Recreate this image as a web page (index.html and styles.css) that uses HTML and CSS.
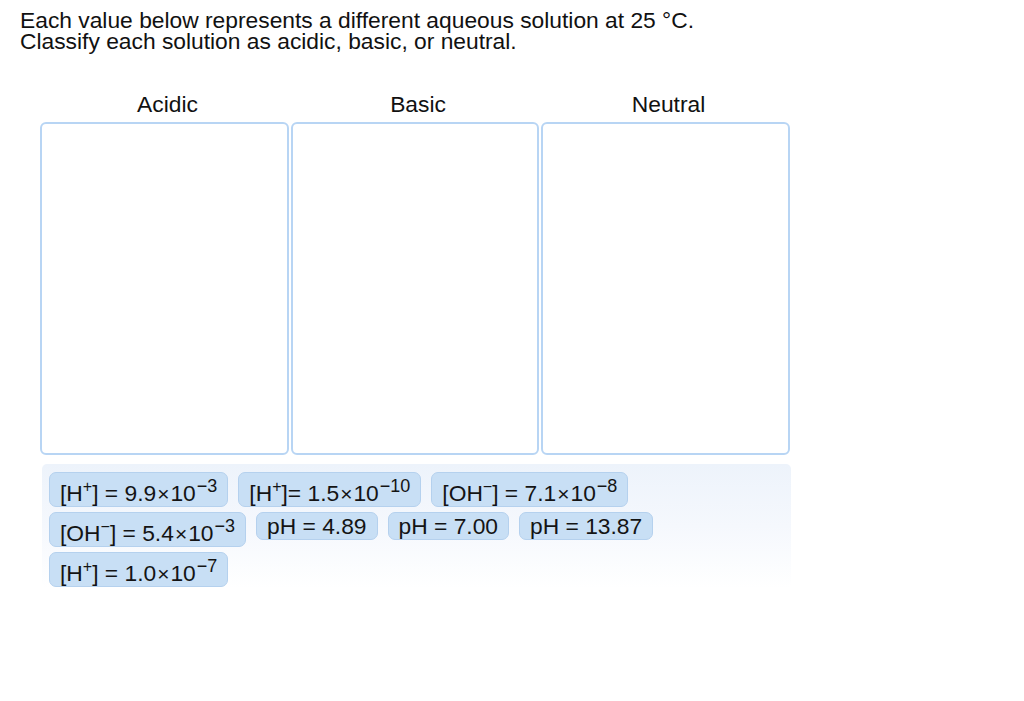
FILE: index.html
```html
<!DOCTYPE html>
<html lang="en">
<head>
<meta charset="utf-8">
<title>Classify solutions</title>
<link rel="stylesheet" href="styles.css">
</head>
<body>
<div class="prompt">
  <p>Each value below represents a different aqueous solution at 25 °C.</p>
  <p>Classify each solution as acidic, basic, or neutral.</p>
</div>
<div class="sorter">
  <div class="bins">
    <div class="bin">
      <div class="bin-label">Acidic</div>
      <div class="bin-box"></div>
    </div>
    <div class="bin">
      <div class="bin-label">Basic</div>
      <div class="bin-box"></div>
    </div>
    <div class="bin">
      <div class="bin-label">Neutral</div>
      <div class="bin-box"></div>
    </div>
  </div>
  <div class="pool">
    <div class="chip tall">[H<sup class="ion">+</sup>] = 9.9<span class="times">×</span>10<sup>−3</sup></div>
    <div class="chip tall">[H<sup class="ion">+</sup>]= 1.5<span class="times">×</span>10<sup>−10</sup></div>
    <div class="chip tall">[OH<sup class="ion">−</sup>] = 7.1<span class="times">×</span>10<sup>−8</sup></div>
    <div class="chip tall">[OH<sup class="ion">−</sup>] = 5.4<span class="times">×</span>10<sup>−3</sup></div>
    <div class="chip">pH = 4.89</div>
    <div class="chip">pH = 7.00</div>
    <div class="chip">pH = 13.87</div>
    <div class="chip tall">[H<sup class="ion">+</sup>] = 1.0<span class="times">×</span>10<sup>−7</sup></div>
  </div>
</div>
</body>
</html>
```
FILE: styles.css
```css
html, body {
  margin: 0;
  padding: 0;
  background: #ffffff;
}

body {
  font-family: "Liberation Sans", Arial, sans-serif;
  font-size: 22.8px;
  color: #111111;
}

.prompt {
  padding: 10px 0 0 20px;
}

.prompt p {
  margin: 0;
  line-height: 21px;
}

.sorter {
  padding: 39px 0 0 40px;
  width: 751px;
}

.bins {
  display: grid;
  grid-template-columns: 249px 248px 249px;
  column-gap: 2px;
}

.bin {
  display: flex;
  flex-direction: column;
}

.bin-label {
  text-align: center;
  line-height: 26px;
  padding-left: 6px;
  margin-bottom: 5px;
}

.bin-box {
  height: 329px;
  border: 2px solid #b8d5f4;
  border-radius: 6px;
  background: #ffffff;
}

.pool {
  margin: 9px 0 0 2px;
  width: 735px;
  height: 110px;
  padding: 8px 7px 6px 7px;
  border-radius: 5px;
  background: linear-gradient(to bottom, #edf3fb 0%, #f5f8fd 50%, #ffffff 100%);
  display: flex;
  flex-wrap: wrap;
  align-items: flex-start;
  align-content: flex-start;
  column-gap: 10px;
  row-gap: 5px;
}

.chip {
  background: #c8dff5;
  border: 1px solid #b5d1ee;
  border-radius: 7px;
  padding: 0 10px;
  line-height: 26px;
  height: 26px;
  white-space: nowrap;
  color: #141414;
}

.chip.tall {
  box-sizing: border-box;
  height: 35px;
  padding-top: 7px;
}

.chip sup {
  font-size: 18px;
  line-height: 0;
  vertical-align: 9px;
  margin-left: 1px;
}

.chip sup.ion {
  font-size: 16px;
  margin-left: 0;
  margin-right: 0;
}

.times {
  font-size: 21px;
  margin: 0 1px;
}
```
